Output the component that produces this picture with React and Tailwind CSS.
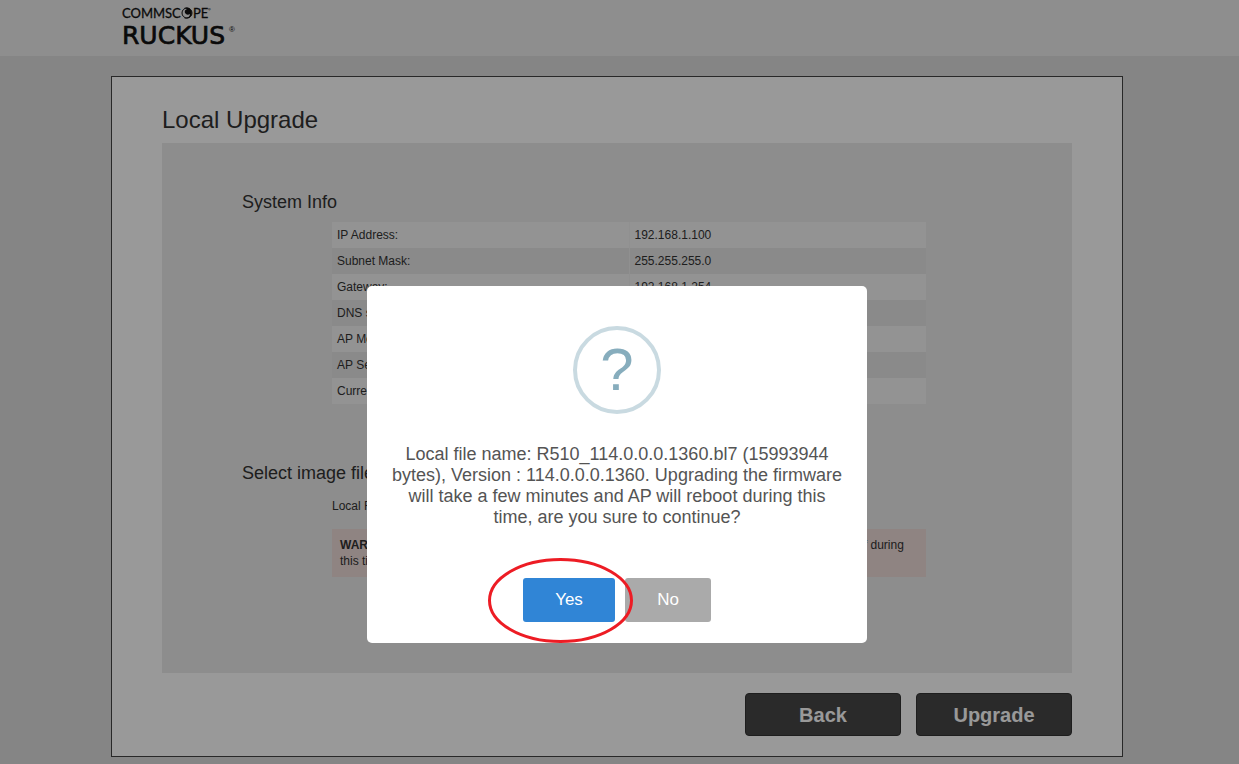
import { useState } from "react";

const systemInfo = [
  { label: "IP Address:", value: "192.168.1.100" },
  { label: "Subnet Mask:", value: "255.255.255.0" },
  { label: "Gateway:", value: "192.168.1.254" },
  { label: "DNS server:", value: "192.168.1.254" },
  { label: "AP Model:", value: "R510" },
  { label: "AP Serial Number:", value: "-" },
  { label: "Current Version:", value: "114.0.0.0" },
];

const Logo = () => (
  <svg width="120" height="48" viewBox="0 0 120 48" className="overflow-visible" role="img" aria-label="CommScope Ruckus">
    <text x="0" y="18" fontSize="13" fontFamily="Lato, sans-serif" fill="#111" stroke="#111" strokeWidth="0.3">COMMSC</text>
    <circle cx="65" cy="13" r="5" fill="none" stroke="#111" />
    <path d="M62 8 A5.5 5.5 0 1 1 62 18 Q68 18 68 14 Q65 16 63 13 Q62 10 65 9 Z" fill="#111" />
    <text x="71" y="18" fontSize="13" fontFamily="Lato, sans-serif" fill="#111" stroke="#111" strokeWidth="0.3">PE</text>
    <text x="86" y="11" fontSize="4" fontFamily="Inter, sans-serif" fill="#111">®</text>
    <text x="0" y="44" fontSize="25" fontFamily="'DejaVu Sans', sans-serif" fill="#111" stroke="#111" strokeWidth="0.7">RUCKUS</text>
    <text x="107" y="32" fontSize="8" fontFamily="'Liberation Sans', sans-serif" fill="#111">®</text>
  </svg>
);

const SystemInfo = () => (
  <section>
    <h2 className="text-lg leading-5">System Info</h2>
    <table className="mt-[10px] ml-[90px] w-[calc(100%-90px)] table-fixed border-collapse text-xs">
      <tbody>
        {systemInfo.map((row) => (
          <tr key={row.label} className="h-[26px] odd:bg-[#f5f5f5] even:bg-[#e6e6e6]">
            <th scope="row" className="border-r border-[#f1f1f1] px-[5px] text-left font-normal">{row.label}</th>
            <td className="px-[5px]">{row.value}</td>
          </tr>
        ))}
      </tbody>
    </table>
  </section>
);

const ImageFile = () => (
  <section className="mt-[59px]">
    <h2 className="text-lg leading-5">Select image file</h2>
    <div className="ml-[90px] text-xs">
      <div className="mt-[13px] flex h-5 items-center gap-4">
        <label htmlFor="image">Local File Name:</label>
        <input id="image" type="file" className="w-60" />
      </div>
      <p className="mt-[13px] bg-[#efdcd9] p-2 leading-4">
        <strong>WARNING:</strong> Upgrading the firmware will take a few minutes and the AP will reboot. Do not power off during
        this time.
      </p>
    </div>
  </section>
);

const ConfirmDialog = ({ onClose }) => (
  <div className="fixed inset-0 flex items-start justify-center bg-black/40 pt-[286px] pr-[5px]">
    <div role="dialog" aria-modal="true" aria-describedby="message" className="w-[500px] rounded-[5px] bg-white px-5 pt-10 pb-[21px] text-center">
      <div className="mx-auto flex size-[88px] items-center justify-center rounded-full border-4 border-[#c9dae1] text-[60px] leading-none text-[#87adbd]">
        ?
      </div>
      <p id="message" className="mt-[30px] text-lg leading-[21px] text-[#545454]">
        Local file name: R510_114.0.0.0.1360.bl7 (15993944 bytes), Version : 114.0.0.0.1360. Upgrading the firmware will
        take a few minutes and AP will reboot during this time, are you sure to continue?
      </p>
      <div className="mt-[50px] flex justify-center gap-[10px] text-[17px] text-white">
        <div className="relative">
          <button onClick={onClose} className="h-11 w-[92px] rounded-[3px] bg-[#3085d6]">Yes</button>
          <svg className="pointer-events-none absolute -top-5 -left-9 z-10 h-[86px] w-[148px]" viewBox="0 0 148 86" fill="none">
            <ellipse cx="73.5" cy="42.5" rx="71" ry="41" stroke="#ed1c24" strokeWidth="3" />
          </svg>
        </div>
        <button onClick={onClose} className="h-11 w-[86px] rounded-[3px] bg-[#aaa]">No</button>
      </div>
    </div>
  </div>
);

const App = () => {
  const [open, setOpen] = useState(true);
  const buttonStyle = "h-[43px] w-[156px] rounded border border-[#333] bg-[#464646] text-xl font-bold text-white";

  return (
    <div className="min-h-screen bg-[#dedede] font-['Liberation_Sans',Arial,sans-serif] text-[#333]">
      <header className="h-14 bg-[#ededed] pr-[5px]">
        <div className="mx-auto max-w-[1012px] px-[11px]">
          <Logo />
        </div>
      </header>
      <div className="pt-5 pr-[5px]">
        <main className="mx-auto max-w-[1012px] border border-[#444] bg-white px-[50px] pt-7 pb-5">
          <h1 className="text-2xl leading-[30px]">Local Upgrade</h1>
          <div className="mt-2 bg-[#ebebeb] pt-[49px] pr-[146px] pb-24 pl-20">
            <SystemInfo />
            <ImageFile />
          </div>
          <div className="mt-5 flex justify-end gap-[15px]">
            <button className={buttonStyle}>Back</button>
            <button className={buttonStyle} onClick={() => setOpen(true)}>Upgrade</button>
          </div>
        </main>
      </div>
      {open && <ConfirmDialog onClose={() => setOpen(false)} />}
    </div>
  );
};

export default App;
